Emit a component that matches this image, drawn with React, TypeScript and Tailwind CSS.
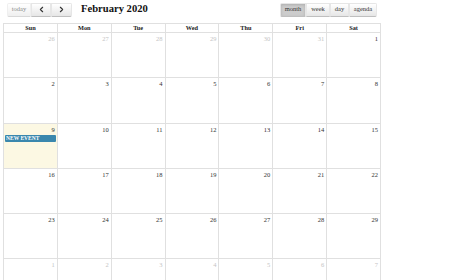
import { ChevronLeft, ChevronRight } from "lucide-react";

type Day = { n: number; other: boolean };

const weekDays = ["Sun", "Mon", "Tue", "Wed", "Thu", "Fri", "Sat"];

function buildWeeks(): Day[][] {
	const days: Day[] = [];
	[26, 27, 28, 29, 30, 31].forEach(n => days.push({ n, other: true }));
	for (let n = 1; n <= 29; n++) days.push({ n, other: false });
	for (let n = 1; n <= 7; n++) days.push({ n, other: true });
	const weeks: Day[][] = [];
	for (let i = 0; i < days.length; i += 7) weeks.push(days.slice(i, i + 7));
	return weeks;
}

const btn = "h-[14px] px-[3px] border border-[#e6e6e6] border-b-[#bfbfbf] bg-linear-to-b from-white to-[#e6e6e6] text-[#333] text-[6.5px] leading-none flex items-center justify-center";

function App() {
	const weeks = buildWeeks();

	return (
		<main className="w-[474px] h-[280px] overflow-hidden bg-white pl-[3px] pt-[2px] font-['Liberation_Serif',serif] text-[#333]">
			<div className="w-[378px]">
				<div className="flex items-center justify-between px-[4px] h-[15px]">
					<div className="flex items-center">
						<button className={`${btn} w-[24px] rounded-l-[2px] opacity-60`}>today</button>
						<button className={`${btn} w-[20px]`}>
							<ChevronLeft size={9} strokeWidth={3} />
						</button>
						<button className={`${btn} w-[21px] rounded-r-[2px]`}>
							<ChevronRight size={9} strokeWidth={3} />
						</button>
						<h2 className="ml-[9px] text-[10.6px] font-bold leading-none text-[#111]">February 2020</h2>
					</div>
					<div className="flex">
						<button className={`${btn} w-[26px] rounded-l-[2px] bg-none bg-[#cccccc] shadow-[inset_0_1px_3px_rgba(0,0,0,0.15)]`}>month</button>
						<button className={`${btn} w-[24px]`}>week</button>
						<button className={`${btn} w-[19px]`}>day</button>
						<button className={`${btn} w-[28px] rounded-r-[2px]`}>agenda</button>
					</div>
				</div>

				<div className="mt-[6px] border-l border-t border-[#e0e0e0]">
					<div className="grid grid-cols-7 h-[9px]">
						{weekDays.map(d => (
							<div key={d} className="border-r border-b border-[#e0e0e0] text-center text-[6.3px] font-bold leading-[8px] text-[#222]">{d}</div>
						))}
					</div>
					{weeks.map((week, wi) => (
						<div key={wi} className="grid grid-cols-7 h-[45.3px]">
							{week.map((day, di) => {
								const today = !day.other && day.n === 9;
								return (
									<div
										key={di}
										className={`border-r border-b border-[#e0e0e0] flex flex-col ${today ? "bg-[#fcf8e3]" : ""}`}
									>
										<div className={`text-right pr-[2px] pt-[2px] text-[6.5px] leading-[7px] ${day.other ? "text-[#c4c4c4]" : "text-[#333]"}`}>
											{day.n}
										</div>
										{today && (
											<div className="mt-[2px] mx-[1px] h-[7px] rounded-[1px] bg-[#3a87ad] text-white text-[5.5px] font-bold leading-[7px] pl-[1px] whitespace-nowrap overflow-hidden">
												NEW EVENT
											</div>
										)}
									</div>
								);
							})}
						</div>
					))}
				</div>
			</div>
		</main>
	);
}

export default App;
